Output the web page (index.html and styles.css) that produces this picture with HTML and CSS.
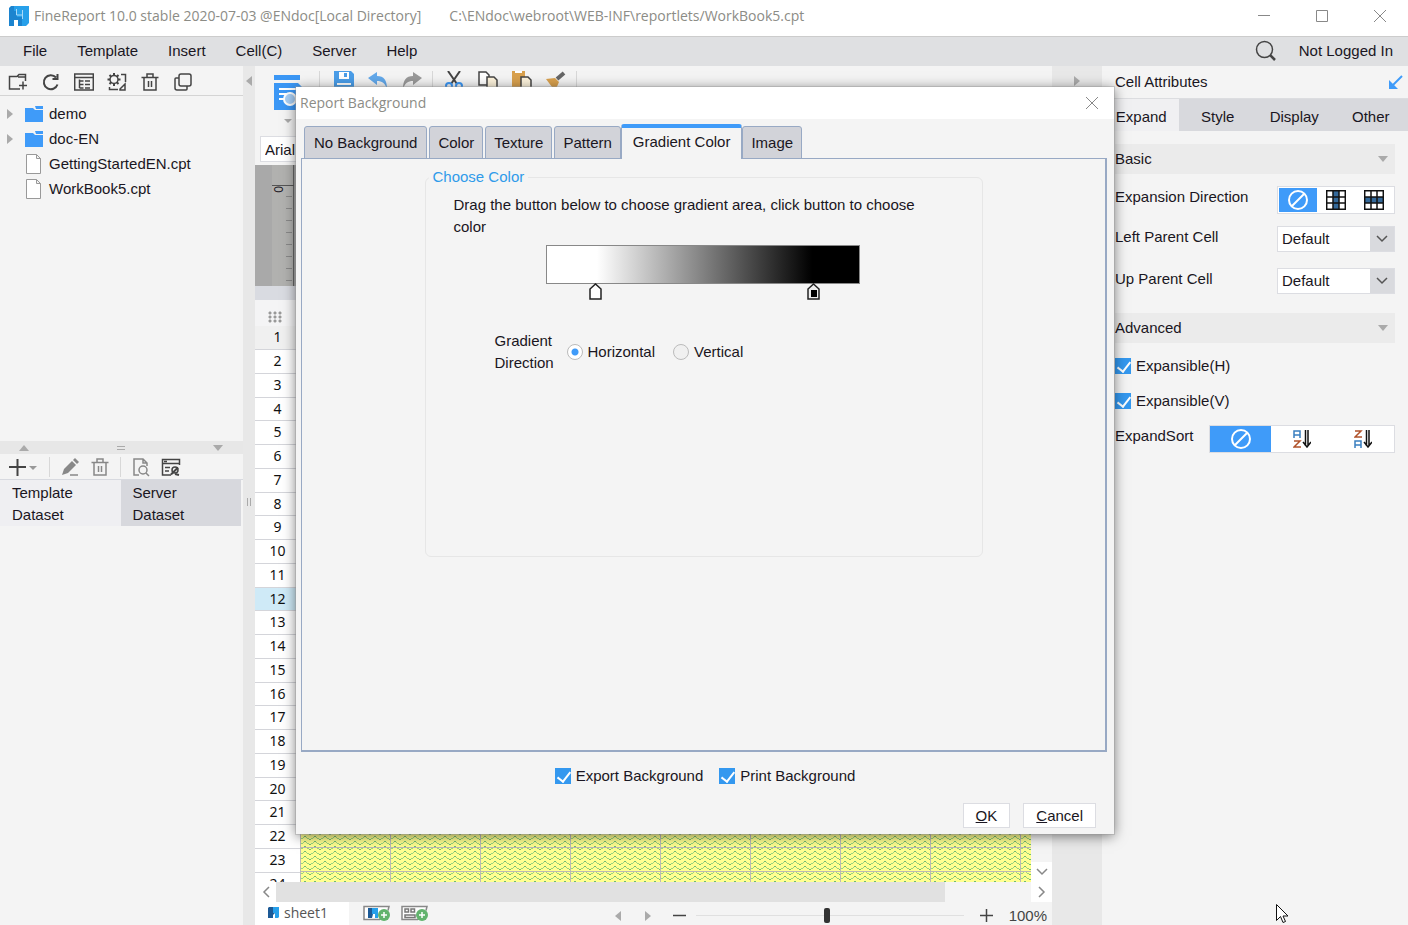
FILE: index.html
```html
<!DOCTYPE html>
<html lang="en">
<head>
    <meta charset="UTF-8">
    <meta name="viewport" content="width=device-width, initial-scale=1.0">
    <title>FineReport 10.0</title>
    <link rel="stylesheet" href="styles.css">
</head>
<body>

<header class="titlebar">
    <svg class="logo" width="20" height="20" viewBox="0 0 20 20"><path fill="#1c84cf" d="M0 2l2-2h6v10h5v10H9v-6H5v6H0z"/><path fill="#27a0ea" d="M5 0h15v17l-3 3h-4v-9H8V5H5z"/><path fill="none" stroke="#a9daf8" d="M7.500 3v6h6M13.500 4v9"/></svg>
    <span class="window-title">FineReport 10.0 stable 2020-07-03 @ENdoc[Local Directory]</span>
    <span class="window-path">C:\ENdoc\webroot\WEB-INF\reportlets/WorkBook5.cpt</span>
    <div class="window-buttons">
        <button aria-label="Minimize"><svg width="12" height="12" viewBox="0 0 12 12"><path d="M0 5.500h12"/></svg></button>
        <button aria-label="Maximize"><svg width="12" height="12" viewBox="0 0 12 12"><path d="M.5.5h11v11H.5z"/></svg></button>
        <button aria-label="Close"><svg width="12" height="12" viewBox="0 0 12 12"><path d="M0 0l12 12M12 0L0 12"/></svg></button>
    </div>
</header>

<nav class="menubar">
    <button>File</button>
    <button>Template</button>
    <button>Insert</button>
    <button>Cell(C)</button>
    <button>Server</button>
    <button>Help</button>
    <button class="search" aria-label="Search"><svg width="22" height="22" viewBox="0 0 22 22" fill="none" stroke="#444"><circle cx="9.500" cy="9.500" r="8" stroke-width="1.500"/><path d="M15 15l5 5" stroke-width="2.500"/></svg></button>
    <button class="login">Not Logged In</button>
</nav>

<main class="workspace">

    <aside class="files-side">
        <div class="icon-bar files-bar">
            <button aria-label="New folder"><svg width="20" height="20" viewBox="0 0 20 20"><path d="M12 17H1.500V4.500H9l2-2h6.500V9M10 5h7.500M15 9.500v8M11 13.500h8"/></svg></button>
            <button aria-label="Refresh"><svg width="20" height="20" viewBox="0 0 20 20"><path stroke-width="2" d="M16.500 12.500A7 7 0 1 1 15 5.500M16.500 2v5h-5"/></svg></button>
            <button aria-label="Structure"><svg width="20" height="20" viewBox="0 0 20 20"><path d="M.7 2h18.600v16H.7zM1 5.500h18M5.500 7.500v8.500M5.500 9h4M5.500 12.500h4M5.500 16h4M11 9h5M11 12.500h5M11 16h5"/></svg></button>
            <button aria-label="Settings"><svg width="20" height="20" viewBox="0 0 20 20"><circle cx="7" cy="7.500" r="4"/><path stroke-width="2" d="M7 1v2.500M7 11.500V14M.5 7.500H3M11 7.500h2.500M2.500 3l2 2M9.500 10l2 2M11.500 3l-2 2M4.500 10l-2 2"/><path d="M14 2.500h4.500V10M2.500 15v2.500H11M13 17l5-5v6h-5z"/></svg></button>
            <button aria-label="Delete"><svg width="20" height="20" viewBox="0 0 20 20"><path d="M1.500 5.500h17M7 5V2h6v3M4 5.500V18h12V5.500M8.500 9v6M11.500 9v6"/></svg></button>
            <button aria-label="Copy"><svg width="20" height="20" viewBox="0 0 20 20"><rect x="6" y="2" width="12" height="12" rx="2"/><path d="M6 6H3a1 1 0 0 0-1 1v9a2 2 0 0 0 2 2h9a1 1 0 0 0 1-1v-3"/></svg></button>
        </div>
        <ul class="tree">
            <li><i class="tri right"></i><svg width="20" height="18" viewBox="0 0 20 18"><path fill="#3f9bf9" d="M1 3h8l2 2h8v12H1zM11 1h8v3h-7z"/></svg>demo</li>
            <li><i class="tri right"></i><svg width="20" height="18" viewBox="0 0 20 18"><path fill="#3f9bf9" d="M1 3h8l2 2h8v12H1zM11 1h8v3h-7z"/></svg>doc-EN</li>
            <li><i class="tri none"></i><svg width="20" height="20" viewBox="0 0 20 20"><path fill="#fff" stroke="#999" d="M2.500.5h10l4 4v15h-14zM12.500.5v4h4"/></svg>GettingStartedEN.cpt</li>
            <li><i class="tri none"></i><svg width="20" height="20" viewBox="0 0 20 20"><path fill="#fff" stroke="#999" d="M2.500.5h10l4 4v15h-14zM12.500.5v4h4"/></svg>WorkBook5.cpt</li>
        </ul>
        <div class="h-splitter"><i class="tri up"></i><i class="grip"></i><i class="tri down"></i></div>
        <div class="icon-bar data-bar">
            <button class="add" aria-label="Add"><svg width="30" height="20" viewBox="0 0 30 20"><path stroke-width="2" d="M0 10h17M8.500 2v17"/><path fill="#999" stroke="none" d="M20 9h8l-4 4z"/></svg></button>
            <i class="sep"></i>
            <button class="dim" aria-label="Edit"><svg width="20" height="20" viewBox="0 0 20 20"><path fill="#888" stroke="none" d="M2 18l2-6 8-8 4 4-8 8zM13 3l2-2 4 4-2 2z"/><path d="M10 18h8"/></svg></button>
            <button class="dim" aria-label="Delete"><svg width="20" height="20" viewBox="0 0 20 20"><path d="M1.500 5.500h17M7 5V2h6v3M4 5.500V18h12V5.500M8.500 9v6M11.500 9v6"/></svg></button>
            <i class="sep"></i>
            <button class="dim" aria-label="Preview"><svg width="20" height="20" viewBox="0 0 20 20"><path d="M8 18H3V2h9l4 4v3M12 2v4h4"/><circle cx="12" cy="13" r="4"/><path d="M15 16l3 3"/></svg></button>
            <button aria-label="Connection"><svg width="20" height="20" viewBox="0 0 20 20"><path d="M10 18H1.500V2.500h17V8M1.500 6.500h17M3 4.500h3M4 10.500h5M4 14h4"/><circle cx="14" cy="13" r="3"/><path stroke-width="2" d="M10 17.500l7-7M14 17l4 1"/></svg></button>
        </div>
        <div class="dataset-tabs">
            <button>Template Dataset</button>
            <button class="active">Server Dataset</button>
        </div>
    </aside>

    <div class="v-splitter left-split"><i class="tri left"></i><i class="grip-v"></i></div>

    <section class="center">
        <div class="ribbon">
            <button class="preview" aria-label="Preview"><svg width="28" height="36" viewBox="0 0 28 36"><path fill="#3b97f5" d="M0 0h26v5H0zM0 8h24l4 4v23H0z"/><path stroke="#fff" stroke-width="2" d="M5 14h18M5 19h9M5 24h6"/><circle cx="16" cy="24" r="6" fill="#a9d0f7" stroke="#fff" stroke-width="2"/></svg><i class="tri down small"></i></button>
            <i class="sep"></i>
            <button aria-label="Save"><svg width="20" height="20" viewBox="0 0 20 20"><path fill="#4a9de8" d="M0 0h17l3 3v17H0z"/><path fill="#fff" d="M5 1h10v7H5z"/><path fill="#4a9de8" d="M10 2h3v4h-3z"/><path fill="#fff" d="M3 12h14v2H3z"/></svg></button>
            <button aria-label="Undo"><svg width="20" height="20" viewBox="0 0 20 20"><path fill="#62a8ea" d="M0 7l9-6v4c7 0 10 4 10 13-2-6-5-8-10-8v4z"/></svg></button>
            <button aria-label="Redo"><svg width="20" height="20" viewBox="0 0 20 20"><path fill="#999" d="M20 7l-9-6v4C4 5 1 9 1 18c2-6 5-8 10-8v4z"/></svg></button>
            <i class="sep"></i>
            <button aria-label="Cut"><svg width="20" height="20" viewBox="0 0 20 20"><path stroke="#444" stroke-width="2" d="M4 0l9 13M16 0L7 13"/><g fill="none" stroke="#3b97f5" stroke-width="2"><circle cx="5" cy="15" r="3"/><circle cx="15" cy="15" r="3"/></g></svg></button>
            <button aria-label="Copy"><svg width="20" height="20" viewBox="0 0 20 20"><path fill="#fff" stroke="#444" stroke-width="1.500" d="M1 1h7l3 3v10H1z"/><path fill="#fdf3dc" stroke="#444" stroke-width="1.500" d="M9 6h7l3 3v10H9z"/></svg></button>
            <button aria-label="Paste"><svg width="20" height="20" viewBox="0 0 20 20"><path fill="#d9a14e" d="M0 0h13v18H0z"/><path fill="#fff" d="M3 0h7v2H3z"/><path fill="#fdf3dc" stroke="#444" stroke-width="1.500" d="M9 6h7l3 3v10H9z"/></svg></button>
            <button aria-label="Format brush"><svg width="20" height="20" viewBox="0 0 20 20"><path fill="#d9a14e" d="M0 8l9-1 4 4-4 9z"/><path stroke="#666" stroke-width="4" d="M11 8l7-6"/></svg></button>
            <i class="sep"></i>
        </div>
        <div class="font-row"><input aria-label="Font" value="Arial"></div>
        <div class="ruler-area"><div class="ruler"><span>0</span></div></div>
        <div class="band"></div>
        <div class="sheet">
            <div class="row-heads">
                <div class="corner"><i></i></div>
                <ol>
                    <li class="first">1</li><li>2</li><li>3</li><li>4</li><li>5</li><li>6</li><li>7</li><li>8</li>
                    <li>9</li><li>10</li><li>11</li><li class="current">12</li><li>13</li><li>14</li><li>15</li><li>16</li>
                    <li>17</li><li>18</li><li>19</li><li>20</li><li>21</li><li>22</li><li>23</li><li>24</li>
                </ol>
            </div>
            <svg class="cells">
                <defs>
                    <pattern id="wave" width="10" height="5" patternUnits="userSpaceOnUse">
                        <rect width="10" height="5" fill="#ffff90"/>
                        <path fill="#9bd37f" d="M1 3h2v1H1zM3 2h1v1H3zM6 2h1v1H6zM7 3h2v1H7z"/>
                        <path fill="#6fbb75" d="M4 1h2v1H4zM0 4h1v1H0zM9 4h1v1H9z"/>
                    </pattern>
                    <pattern id="lines" width="90" height="24" patternUnits="userSpaceOnUse">
                        <path fill="#bcb9b4" d="M0 0h1v24H0zM0 19h90v1H0z"/>
                    </pattern>
                </defs>
                <rect width="100%" height="100%" fill="url(#wave)"/>
                <rect width="100%" height="100%" fill="url(#lines)"/>
            </svg>
            <div class="v-scroll"><button aria-label="Scroll down"><svg width="12" height="8" viewBox="0 0 12 8"><path d="M1 1l5 5 5-5"/></svg></button></div>
        </div>
        <div class="h-scroll">
            <button aria-label="Scroll left"><svg width="8" height="12" viewBox="0 0 8 12"><path d="M7 1L2 6l5 5"/></svg></button>
            <i class="thumb"></i>
            <button aria-label="Scroll right"><svg width="8" height="12" viewBox="0 0 8 12"><path d="M1 1l5 5-5 5"/></svg></button>
        </div>
        <div class="sheet-bar">
            <button class="sheet-tab"><svg width="11" height="11" viewBox="0 0 11 11"><path fill="#1d5a96" d="M0 1l1-1h4v6h2L5 8v3H0z"/><path fill="#27a0ea" d="M5 0h6v10l-1 1H7V6H5z"/></svg>sheet1</button>
            <button aria-label="Add sheet"><svg width="28" height="17" viewBox="0 0 28 17"><path fill="#fff" stroke="#888" stroke-width="1.500" d="M17 14.500H1v-13h25l-1 4"/><path fill="#1d5a96" d="M5 3h5v6l-1 4H5z"/><path fill="#27a0ea" d="M9 3h6v10h-3V9H9z"/><circle cx="21" cy="10" r="6" fill="#62b36d"/><path stroke="#fff" stroke-width="1.500" d="M21 7v6M18 10h6"/></svg></button>
            <button aria-label="Add form"><svg width="28" height="17" viewBox="0 0 28 17"><path fill="#fff" stroke="#888" stroke-width="1.500" d="M17 14.500H1v-13h25l-1 4"/><path fill="none" stroke="#777" stroke-width="1.500" d="M4 4h3.500v3H4zM10 4h3.500v3H10zM4 10h10v2.500H4z"/><circle cx="21" cy="10" r="6" fill="#62b36d"/><path stroke="#fff" stroke-width="1.500" d="M21 7v6M18 10h6"/></svg></button>
            <div class="zoom">
                <button aria-label="Previous sheet"><i class="tri left"></i></button>
                <button aria-label="Next sheet"><i class="tri right"></i></button>
                <button aria-label="Zoom out"><svg width="13" height="13" viewBox="0 0 13 13"><path d="M0 6.500h13"/></svg></button>
                <input type="range" min="0" max="100" value="49" aria-label="Zoom">
                <button aria-label="Zoom in"><svg width="13" height="13" viewBox="0 0 13 13"><path d="M0 6.500h13M6.500 0v13"/></svg></button>
                <span>100%</span>
            </div>
        </div>
    </section>

    <div class="v-splitter right-split"><i class="tri right"></i></div>

    <aside class="attr-side">
        <div class="attr-head">Cell Attributes
            <button aria-label="Dock"><svg width="14" height="14" viewBox="0 0 14 14" fill="none" stroke="#3f9bf9"><path stroke-width="2" d="M13 1L3 11"/><path fill="#3f9bf9" stroke="none" d="M0 5l9 9H0z"/></svg></button>
        </div>
        <div class="attr-tabs">
            <button class="active">Expand</button>
            <button>Style</button>
            <button>Display</button>
            <button>Other</button>
        </div>
        <div class="attrs">
            <h3>Basic<i class="tri down"></i></h3>
            <div class="attr-row">
                <span>Expansion Direction</span>
                <div class="segmented">
                    <button class="active" aria-label="None"><svg width="22" height="22" viewBox="0 0 22 22" fill="none" stroke="#fff" stroke-width="2"><circle cx="11" cy="11" r="9"/><path d="M5 17L17 5"/></svg></button>
                    <button aria-label="Vertical"><svg width="20" height="20" viewBox="0 0 20 20"><path fill="#fff" d="M0 0h20v20H0z"/><path fill="#34699a" d="M7 0h6v20H7z"/><path fill="none" stroke="#111" stroke-width="1.500" d="M.7.7h18.600v18.600H.7zM7 0v20M13 0v20M0 7h20M0 13h20"/></svg></button>
                    <button aria-label="Horizontal"><svg width="20" height="20" viewBox="0 0 20 20"><path fill="#fff" d="M0 0h20v20H0z"/><path fill="#34699a" d="M0 7h20v6H0z"/><path fill="none" stroke="#111" stroke-width="1.500" d="M.7.7h18.600v18.600H.7zM7 0v20M13 0v20M0 7h20M0 13h20"/></svg></button>
                </div>
            </div>
            <div class="attr-row">
                <label for="left-parent">Left Parent Cell</label>
                <div class="select"><select id="left-parent"><option>Default</option></select><svg width="12" height="8" viewBox="0 0 12 8"><path d="M1 1l5 5 5-5"/></svg></div>
            </div>
            <div class="attr-row">
                <label for="up-parent">Up Parent Cell</label>
                <div class="select"><select id="up-parent"><option>Default</option></select><svg width="12" height="8" viewBox="0 0 12 8"><path d="M1 1l5 5 5-5"/></svg></div>
            </div>
            <h3>Advanced<i class="tri down"></i></h3>
            <label class="check"><input type="checkbox" checked>Expansible(H)</label>
            <label class="check"><input type="checkbox" checked>Expansible(V)</label>
            <div class="attr-row sort-row">
                <span>ExpandSort</span>
                <div class="segmented">
                    <button class="active" aria-label="No sort"><svg width="22" height="22" viewBox="0 0 22 22" fill="none" stroke="#fff" stroke-width="2"><circle cx="11" cy="11" r="9"/><path d="M5 17L17 5"/></svg></button>
                    <button aria-label="Ascending"><svg width="18" height="18" viewBox="0 0 18 18" fill="none"><path stroke="#3a7fc0" stroke-width="1.500" d="M1 8V1h6v7M1 5h6"/><path stroke="#b0522a" stroke-width="1.500" d="M1 11h6l-6 6h7"/><path stroke="#111" stroke-width="1.500" d="M12.500 0v16M15 0v16M10 12l4 5 4-5"/></svg></button>
                    <button aria-label="Descending"><svg width="18" height="18" viewBox="0 0 18 18" fill="none"><path stroke="#b0522a" stroke-width="1.500" d="M1 1h6L1 7h7"/><path stroke="#3a7fc0" stroke-width="1.500" d="M1 18v-7h6v7M1 15h6"/><path stroke="#111" stroke-width="1.500" d="M12.500 0v16M15 0v16M10 12l4 5 4-5"/></svg></button>
                </div>
            </div>
        </div>
    </aside>
</main>

<div class="dialog" role="dialog" aria-label="Report Background">
    <div class="dialog-title">Report Background
        <button aria-label="Close"><svg width="12" height="12" viewBox="0 0 12 12"><path d="M0 0l12 12M12 0L0 12"/></svg></button>
    </div>
    <div class="dialog-tabs">
        <button>No Background</button>
        <button>Color</button>
        <button>Texture</button>
        <button>Pattern</button>
        <button class="active">Gradient Color</button>
        <button>Image</button>
    </div>
    <div class="dialog-panel">
        <fieldset>
            <legend>Choose Color</legend>
            <p>Drag the button below to choose gradient area, click button to choose color</p>
            <div class="gradient">
                <button class="stop from" aria-label="Start color"><svg width="13" height="17" viewBox="0 0 13 17"><path fill="#fff" stroke="#222" stroke-width="1.500" d="M1 16V6l5.500-5L12 6v10z"/></svg></button>
                <button class="stop to" aria-label="End color"><svg width="13" height="17" viewBox="0 0 13 17"><path fill="#eee" stroke="#222" stroke-width="1.500" d="M1 16V6l5.500-5L12 6v10z"/><path d="M4 7h6v7H4z"/></svg></button>
            </div>
            <div class="direction">
                <span>Gradient Direction</span>
                <label><input type="radio" name="direction" checked>Horizontal</label>
                <label><input type="radio" name="direction">Vertical</label>
            </div>
        </fieldset>
    </div>
    <div class="dialog-options">
        <label class="check"><input type="checkbox" checked>Export Background</label>
        <label class="check"><input type="checkbox" checked>Print Background</label>
    </div>
    <div class="dialog-buttons">
        <button><u>O</u>K</button>
        <button><u>C</u>ancel</button>
    </div>
</div>

<svg class="pointer" width="12" height="20" viewBox="0 0 12 20"><path fill="#fff" stroke="#111" d="M.5.5v16l4-4 2.500 6 2.500-1-2.500-5.500h5z"/></svg>

</body>
</html>
```
FILE: styles.css
```css
* {
    box-sizing: border-box;
}

body {
    margin: 0;
    height: 100vh;
    display: flex;
    flex-direction: column;
    overflow: hidden;
    background: #f4f4f4;
    color: #1a1622;
    font: 15px/22px "Liberation Sans", Arial, sans-serif;
}

button, input, select {
    margin: 0;
    padding: 0;
    border: 0;
    background: none;
    color: inherit;
    font: inherit;
}

svg {
    display: block;
    flex: none;
}

/* small triangles */
.tri {
    display: block;
    flex: none;
    border: 5px solid transparent;
}
.tri.right { border-left: 6px solid #aaa; border-right: 0; }
.tri.left { border-right: 6px solid #aaa; border-left: 0; }
.tri.up { border-bottom: 6px solid #aaa; border-top: 0; }
.tri.down { border-top: 6px solid #aaa; border-bottom: 0; }
.tri.none { border-left-width: 6px; border-right: 0; }
.tri.small { border-width: 4px 4px 0; }

.sep {
    width: 1px;
    height: 20px;
    background: #d8d8d8;
}

/* title bar */
.titlebar {
    height: 37px;
    flex: none;
    display: flex;
    align-items: center;
    padding: 0 22px 4px 9px;
    background: #fff;
    border-bottom: 1px solid #ccc;
    color: #8c8c86;
    font-family: "Open Sans", "Noto Sans", sans-serif;
    font-size: 14px;
}
.window-title { margin-left: 5px; }
.window-path { margin-left: 28px; }
.window-buttons {
    margin-left: auto;
    display: flex;
    gap: 46px;
}
.window-buttons svg, .dialog-title svg {
    fill: none;
    stroke: #888;
}

/* menu */
.menubar {
    height: 29px;
    flex: none;
    display: flex;
    align-items: center;
    gap: 30px;
    padding: 0 15px 2px 23px;
    background: #dfe0e2;
}
.search { margin-left: auto; }
.login { margin-left: -8px; }

.workspace {
    flex: 1;
    min-height: 0;
    display: flex;
}

/* left side */
.files-side {
    width: 243px;
    flex: none;
    display: flex;
    flex-direction: column;
}
.icon-bar {
    display: flex;
    align-items: center;
    flex: none;
}
.icon-bar svg {
    fill: none;
    stroke: #444;
    stroke-width: 1.5;
}
.icon-bar .dim svg { stroke: #888; }
.files-bar {
    height: 30px;
    padding: 2px 8px 0;
    gap: 13px;
    border-bottom: 1px solid #d4d4d4;
}
.tree {
    height: 345px;
    margin: 0;
    padding: 5px 0 0 7px;
    list-style: none;
}
.tree li {
    height: 25px;
    display: flex;
    align-items: center;
}
.tree svg { margin: 0 5px 0 11px; }
.h-splitter {
    height: 13px;
    display: flex;
    align-items: center;
    justify-content: space-between;
    padding: 0 20px 0 19px;
    background: #e7e7e7;
}
.grip {
    width: 8px;
    height: 4px;
    border: solid #aaa;
    border-width: 1px 0;
}
.data-bar {
    height: 25px;
    padding: 0 9px;
    gap: 10px;
}
.dataset-tabs {
    display: flex;
    padding-right: 2px;
    border-top: 1px solid #d8dae0;
}
.dataset-tabs button {
    flex: 1;
    padding: 2px 45px 0 12px;
    background: #efeff2;
    text-align: left;
}
.dataset-tabs .active { background: #d7d8dd; }

.v-splitter {
    flex: none;
    display: flex;
    flex-direction: column;
    align-items: center;
    padding-top: 10px;
    background: #e8e8e8;
}
.left-split { width: 12px; }
.right-split { width: 50px; }
.grip-v {
    width: 4px;
    height: 8px;
    margin-top: 412px;
    border: solid #aaa;
    border-width: 0 1px;
}

/* report area */
.center {
    flex: 1;
    min-width: 0;
    display: flex;
    flex-direction: column;
}
.ribbon {
    height: 68px;
    flex: none;
    display: flex;
    align-items: flex-start;
    gap: 14px;
    padding: 5px 0 0 19px;
}
.ribbon .sep { margin: 0 -3px 0 -4px; }
.ribbon .preview {
    display: flex;
    flex-direction: column;
    align-items: center;
    gap: 8px;
    padding-top: 4px;
    margin-right: 7px;
}
.ribbon .sep:nth-child(2) { margin-right: 0; }
.font-row {
    height: 31px;
    flex: none;
    padding: 2px 5px;
}
.font-row input {
    width: 120px;
    height: 26px;
    padding: 0 4px;
    border: 1px solid #dcdde2;
    background: #fff;
}
.ruler-area {
    height: 121px;
    flex: none;
    padding-left: 17px;
    background: #a9a9a9;
}
.ruler {
    width: 22px;
    height: 121px;
    padding-top: 20px;
    border-right: 1px solid #666;
    background: repeating-linear-gradient(#0000 0 11px, #888 11px 12px) 14px 20px / 6px no-repeat #b1b1af;
}
.ruler span {
    display: block;
    border-top: 1px solid #555;
    writing-mode: vertical-lr;
    font-size: 12px;
    line-height: 12px;
    width: 22px;
}
.band {
    height: 14px;
    flex: none;
    background: #d9dbe1;
}
.sheet {
    flex: 1;
    min-height: 0;
    display: flex;
}
.row-heads {
    width: 45px;
    overflow: hidden;
    background: #fff;
}
.corner {
    height: 26px;
    padding: 11px 13px;
    background: #f4f4f5;
}
.corner i {
    display: block;
    width: 15px;
    height: 12px;
    background: radial-gradient(circle at 2px 2px, #999 1px, #0000 2px) 0 0 / 5px 4px;
}
.row-heads ol {
    margin: 0;
    padding: 0;
    list-style: none;
    font: 14px/22px "Noto Sans", "DejaVu Sans", sans-serif;
    text-align: center;
    color: #111;
}
.row-heads li {
    height: 24px;
    border-bottom: 1px solid #d4d5da;
}
.row-heads li:nth-child(4n) { height: 23px; }
.row-heads .first { background: #f0f0f0; }
.row-heads .current { background: #cfeaf7; }
.cells {
    flex: 1;
    height: 100%;
    min-width: 0;
}
.v-scroll {
    width: 21px;
    display: flex;
    align-items: flex-end;
}
.v-scroll button, .h-scroll button {
    display: grid;
    place-items: center;
    width: 21px;
    height: 20px;
    background: #fff;
}
.v-scroll svg, .h-scroll svg {
    fill: none;
    stroke: #888;
    stroke-width: 1.5;
}
.h-scroll {
    height: 20px;
    flex: none;
    display: flex;
    justify-content: space-between;
}
.h-scroll .thumb {
    width: 84%;
    margin-right: auto;
    background: #e1e1e1;
}
.sheet-bar {
    height: 23px;
    flex: none;
    display: flex;
    align-items: center;
    gap: 10px;
}
.sheet-tab {
    width: 94px;
    flex: none;
    height: 23px;
    display: flex;
    align-items: center;
    gap: 5px;
    padding: 0 13px 2px;
    margin-right: 4px;
    background: #fff;
    color: #555;
    font-family: "Open Sans", "Noto Sans", sans-serif;
    font-size: 14px;
}
.zoom {
    margin-left: auto;
    padding: 4px 5px 0 0;
    display: flex;
    align-items: center;
    gap: 16px;
    color: #444;
}
.zoom button:nth-child(2) { margin: 0 6px 0 8px; }
.zoom svg {
    stroke: #444;
    stroke-width: 1.5;
}
.zoom input {
    width: 268px;
    height: 16px;
    margin: 0 0 0 -6px;
    appearance: none;
    background: linear-gradient(#e0e0e0, #e0e0e0) center / 100% 1px no-repeat;
}
.zoom input::-webkit-slider-thumb {
    appearance: none;
    width: 6px;
    height: 15px;
    border-radius: 2px;
    background: #333;
}

/* right side */
.attr-side {
    width: 306px;
    flex: none;
}
.attr-head {
    height: 33px;
    display: flex;
    align-items: center;
    justify-content: space-between;
    padding: 0 5px 0 13px;
    border-bottom: 1px solid #dcdde0;
}
.attr-tabs {
    display: flex;
    background: #d8d9dd;
}
.attr-tabs button {
    flex: 1;
    height: 32px;
    padding: 4px 0 0 2px;
}
.attr-tabs .active { background: #f0f0f2; }
.attrs {
    padding: 13px 13px 0;
    display: flex;
    flex-direction: column;
}
.attrs h3 {
    display: flex;
    align-items: center;
    justify-content: space-between;
    height: 30px;
    margin: 0 0 12px;
    padding-right: 7px;
    background: #ebebeb;
    font-size: 15px;
    font-weight: normal;
}
.attr-row {
    display: flex;
    justify-content: space-between;
    margin-bottom: 12px;
}
.attrs h3 ~ h3 { margin-top: 3px; }
.segmented {
    display: flex;
    width: 118px;
    height: 28px;
    padding: 1px;
    border: 1px solid #dcdde2;
    background: #fff;
}
.segmented button {
    flex: 1;
    display: grid;
    place-items: center;
}
.segmented .active { background: #3f9bf9; }
.select {
    display: flex;
    align-items: center;
    position: relative;
    width: 118px;
    height: 26px;
    margin-bottom: 4px;
    border: 1px solid #dcdde2;
    background: linear-gradient(90deg, #fff 92px, #d9dade 92px);
}
.select select {
    width: 100%;
    padding-left: 4px;
    appearance: none;
}
.select svg {
    position: absolute;
    right: 6px;
    pointer-events: none;
    fill: none;
    stroke: #555;
    stroke-width: 1.5;
}
.check {
    display: flex;
    align-items: center;
    gap: 5px;
}
.attrs .check { margin-bottom: 13px; }
.check input {
    appearance: none;
    width: 16px;
    height: 16px;
    background: #3498ef;
}
.check input:checked::before {
    content: "";
    display: block;
    width: 6px;
    height: 11px;
    margin: 1px 0 0 5px;
    border: solid #fff;
    border-width: 0 2px 2px 0;
    transform: rotate(38deg);
}
.sort-row .segmented {
    width: 186px;
    padding: 0;
}

/* dialog window */
.dialog {
    position: absolute;
    top: 87px;
    left: 296px;
    right: 294px;
    height: 747px;
    display: flex;
    flex-direction: column;
    background: #f4f4f4;
    box-shadow: 0 0 0 1px #9996, 0 2px 12px #0008;
}
.dialog-title {
    height: 32px;
    flex: none;
    display: flex;
    align-items: center;
    justify-content: space-between;
    padding: 0 16px 0 4px;
    background: #fff;
    color: #8c8c86;
    font-family: "Open Sans", "Noto Sans", sans-serif;
    font-size: 14px;
}
.dialog-tabs {
    height: 40px;
    flex: none;
    display: flex;
    align-items: flex-end;
    gap: 2px;
    padding-left: 8px;
    margin-bottom: -1px;
}
.dialog-tabs button {
    height: 33px;
    padding: 0 8px;
    border: 1px solid #98a9c4;
    border-radius: 3px 3px 0 0;
    background: #d2d3d9;
}
.dialog-tabs button:first-child { padding: 0 9px; }
.dialog-tabs .active {
    height: 35px;
    margin: 0 -2px;
    padding: 0 11px 4px;
    border-top: 4px solid #3f9bf9;
    border-bottom: 0;
    background: #f4f4f4;
    position: relative;
}
.dialog-panel {
    flex: 1;
    margin: 0 7px 0 5px;
    padding-top: 9px;
    border: 1px solid #98a9c4;
    border-width: 1px 2px 2px 1px;
}
fieldset {
    width: 558px;
    height: 389px;
    margin: 0 auto;
    padding: 8px 28px;
    border: 1px solid #e6e6e6;
    border-radius: 6px;
}
legend {
    margin-left: -25px;
    padding: 0 4px;
    line-height: 18px;
    color: #2f9bea;
}
fieldset p {
    width: 490px;
    margin: 0;
}
.gradient {
    position: relative;
    width: 314px;
    height: 39px;
    margin: 7px 0 0 92px;
    border: 1px solid #888;
    background: linear-gradient(90deg, #fff 16%, #000 85%);
}
.stop {
    position: absolute;
    top: 37px;
}
.from { left: 42px; }
.to { left: 260px; }
.direction {
    display: flex;
    align-items: center;
    gap: 18px;
    margin: 46px 0 0 41px;
}
.direction span {
    width: 64px;
    margin-right: -10px;
}
.direction label {
    display: flex;
    align-items: center;
    gap: 5px;
}
.direction input {
    appearance: none;
    width: 16px;
    height: 16px;
    border: 1px solid #bbb;
    border-radius: 50%;
    background: #f0f0f0;
}
.direction input:checked { background: radial-gradient(#3f9bf9 3px, #fff 4px); }
.dialog-options {
    display: flex;
    justify-content: center;
    gap: 16px;
    padding: 13px 0 16px;
}
.dialog-buttons {
    display: flex;
    justify-content: flex-end;
    gap: 13px;
    padding: 0 18px 6px;
}
.dialog-buttons button {
    height: 25px;
    padding: 0 12px;
    line-height: 20px;
    border: 1px solid #dcdde2;
    background: #fff;
}

.pointer {
    position: absolute;
    left: 1276px;
    bottom: 1px;
}
```
